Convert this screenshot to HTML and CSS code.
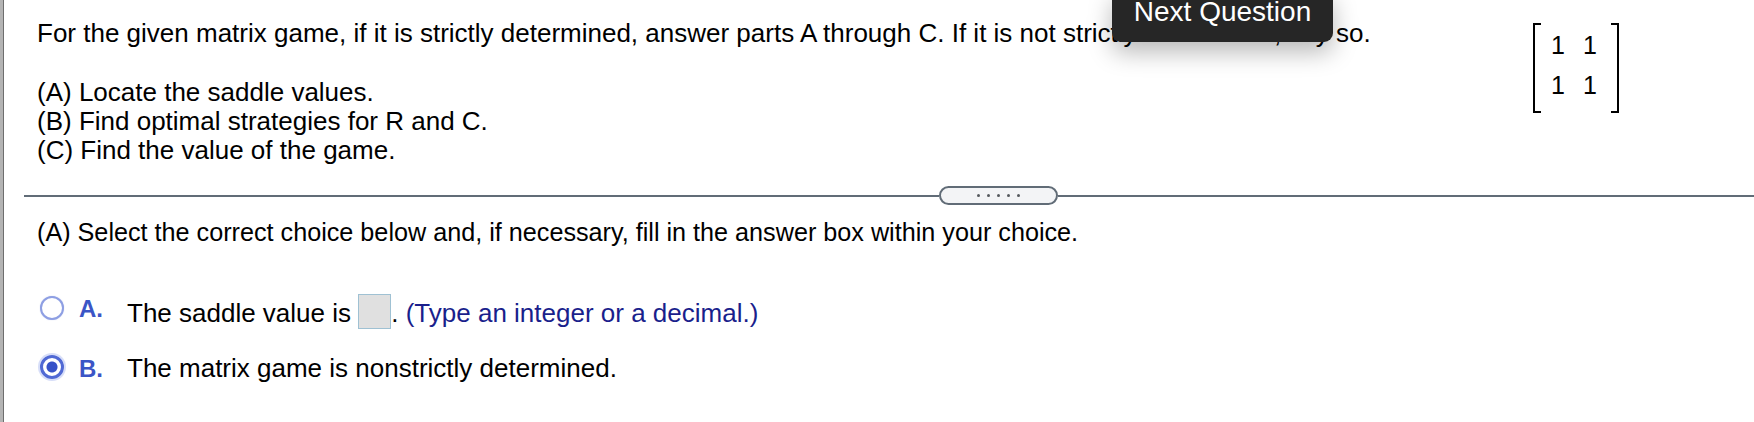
FILE: index.html
```html
<!DOCTYPE html>
<html lang="en">
<head>
<meta charset="utf-8">
<title>Matrix game</title>
<link rel="stylesheet" href="styles.css">
</head>
<body>
<div class="page">
  <div class="edge"></div>
  <main class="content">
    <section class="question">
      <div class="prompt">
        <p class="lead">For the given matrix game, if it is strictly determined, answer parts A through C. If it is not strictly determined, say so.</p>
        <p class="parts">(A) Locate the saddle values.<br>(B) Find optimal strategies for R and C.<br>(C) Find the value of the game.</p>
      </div>
      <div class="matrix">
        <span class="bracket left"></span>
        <div class="cells"><span>1</span><span>1</span><span>1</span><span>1</span></div>
        <span class="bracket right"></span>
      </div>
    </section>

    <div class="divider">
      <span class="rule first"></span>
      <span class="grip"><i></i><i></i><i></i><i></i><i></i></span>
      <span class="rule rest"></span>
    </div>

    <p class="instruction">(A) Select the correct choice below and, if necessary, fill in the answer box within your choice.</p>

    <div class="options">
      <div class="option">
        <span class="radio"></span>
        <span class="key">A.</span>
        <span class="text">The saddle value is <span class="blank"></span>. <span class="hint">(Type an integer or a decimal.)</span></span>
      </div>
      <div class="option">
        <span class="radio checked"></span>
        <span class="key">B.</span>
        <span class="text">The matrix game is nonstrictly determined.</span>
      </div>
    </div>

    <div class="next">Next Question</div>
  </main>
</div>
</body>
</html>
```
FILE: styles.css
```css
html, body {
  margin: 0;
  padding: 0;
  background: #ffffff;
}

body {
  font-family: "Liberation Sans", Arial, Helvetica, sans-serif;
  color: #000000;
}

.page {
  display: flex;
  width: 1754px;
  height: 422px;
  overflow: hidden;
}

.edge {
  flex: none;
  width: 3px;
  background: #b4b4b4;
  border-right: 1px solid #6e6e6e;
}

.content {
  position: relative;
  flex: 1;
}

/* question + matrix */
.question {
  display: flex;
  padding: 19px 0 0 33px;
  font-size: 26px;
  line-height: 29px;
}

.prompt {
  flex: none;
  width: 1496px;
}

.lead {
  margin: 0 0 30px;
  white-space: nowrap;
}

.parts {
  margin: 0;
}

.matrix {
  display: flex;
  margin-top: 4px;
  height: 90px;
}

.bracket {
  width: 6px;
  border: 2px solid #000000;
}

.bracket.left {
  border-right: none;
}

.bracket.right {
  border-left: none;
}

.cells {
  display: grid;
  grid-template-columns: 32px 32px;
  grid-auto-rows: 40px;
  align-content: start;
  margin: 2px 5px 0 1px;
  font-family: "Liberation Sans", Arial, sans-serif;
  font-size: 25px;
  line-height: 40px;
  text-align: center;
}

/* divider with grip */
.divider {
  display: flex;
  align-items: center;
  height: 19px;
  margin: 21px 0 0 20px;
}

.rule {
  height: 2px;
  background: #616c77;
}

.rule.first {
  flex: none;
  width: 915px;
}

.rule.rest {
  flex: 1;
}

.grip {
  flex: none;
  display: flex;
  align-items: center;
  justify-content: center;
  gap: 7px;
  width: 119px;
  height: 19px;
  box-sizing: border-box;
  border: 2px solid #616c77;
  border-radius: 10px;
  background: #f3f4f6;
}

.grip i {
  width: 3px;
  height: 3px;
  border-radius: 50%;
  background: #55595e;
}

/* instruction */
.instruction {
  margin: 13px 0 0;
  padding-left: 33px;
  font-size: 25.2px;
  line-height: 29px;
}

/* options */
.options {
  margin-top: 47px;
}

.option {
  display: flex;
  align-items: flex-start;
  padding-left: 36px;
  font-size: 26px;
  line-height: 29px;
}

.option + .option {
  margin-top: 25px;
}

.radio {
  flex: none;
  width: 24px;
  height: 24px;
  box-sizing: border-box;
  margin-top: 2px;
  border-radius: 50%;
  border: 2px solid #8e9fe3;
  background: #ffffff;
  box-shadow: 0 0 1px rgba(120, 140, 220, 0.5);
}

.radio.checked {
  margin-top: 1px;
  border: 3px solid #5069d4;
  background: radial-gradient(circle, #3752c8 0, #3752c8 5px, #ffffff 6px);
  box-shadow: 0 0 0 2px rgba(140, 160, 235, 0.35);
}

.key {
  flex: none;
  width: 48px;
  margin-left: 15px;
  font-size: 24px;
  font-weight: bold;
  color: #3b55c6;
}

.blank {
  display: inline-block;
  width: 33px;
  height: 35px;
  box-sizing: border-box;
  border: 1px solid #9fc1d3;
  background: #e0e0e0;
  vertical-align: -7px;
}

.hint {
  color: #1a1f8c;
}

/* floating next-question button */
.next {
  position: absolute;
  left: 1108px;
  top: -10px;
  width: 221px;
  height: 52px;
  box-sizing: border-box;
  padding-top: 10px;
  border-radius: 9px;
  background: #262626;
  color: #ffffff;
  font-size: 28px;
  line-height: 24px;
  text-align: center;
  box-shadow: 0 10px 24px rgba(0, 0, 0, 0.28);
}
```
